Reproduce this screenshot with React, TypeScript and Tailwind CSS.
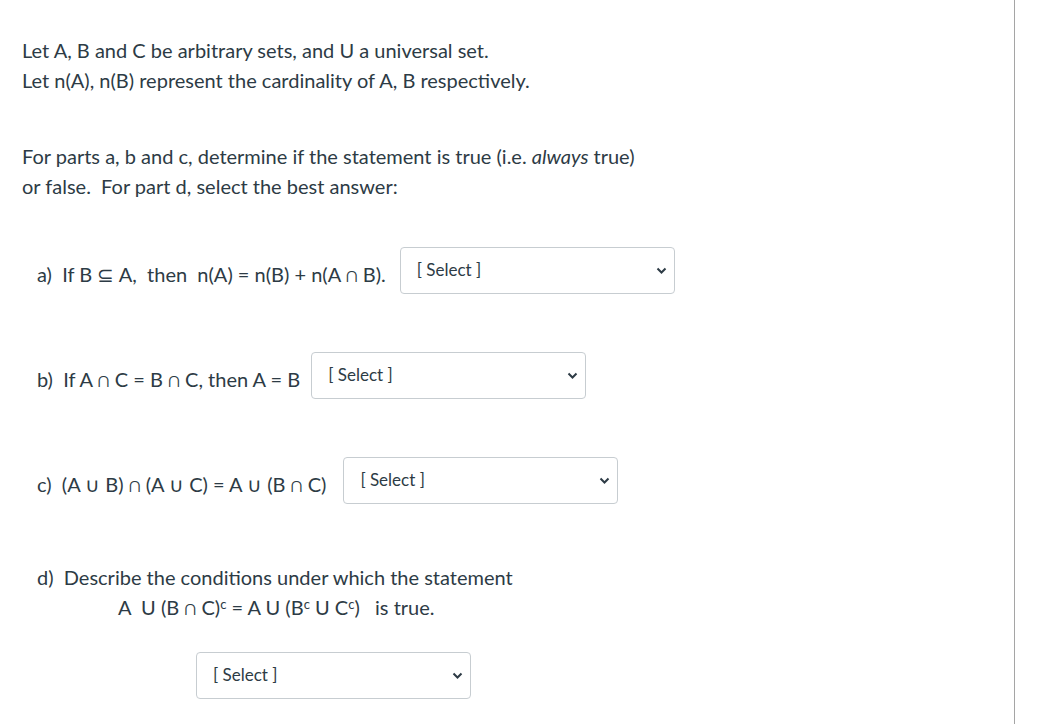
import React from "react";

// dropdown placeholder used by all four parts
function SelectBox({ className = "" }: { className?: string }) {
    return (
        <div className={`relative flex h-[47px] w-[275px] shrink-0 items-center rounded-[4px] border border-[#c7cdd1] bg-white pl-[16px] ${className}`}>
            <span className="-mt-[3px] text-[17px] leading-none text-[#2d3b45]">[ Select ]</span>
            <svg className="absolute right-[7px] top-[19px]" width="11" height="8" viewBox="0 0 11 8">
                <polyline points="1.5,1.5 5.5,5.5 9.5,1.5" fill="none" stroke="#2d3b45" strokeWidth="2" />
            </svg>
        </div>
    );
}

export default function App() {
    return (
        <div className="h-[724px] w-[1053px] overflow-hidden bg-white font-[family-name:Lato,'Open_Sans',sans-serif] text-[#2d3b45]">
            <div className="h-full w-[1015px] border-r border-[#a5a5a5] pl-[22px] pt-[35px] text-[20px] leading-[30px]">
                <p>Let A, B and C be arbitrary sets, and U a universal set.</p>
                <p>Let n(A), n(B) represent the cardinality of A, B respectively.</p>

                <p className="mt-[46px]">For parts a, b and c, determine if the statement is true (i.e. <em>always</em> true)</p>
                <p>or false.&nbsp; For part d, select the best answer:</p>

                <div className="mt-[46px] flex items-center pl-[15px]">
                    <span className="mt-[6px] whitespace-nowrap">a)&nbsp; If B ⊆ A,&nbsp; then&nbsp; n(A) = n(B) + n(A ∩ B).</span>
                    <SelectBox className="ml-[14px]" />
                </div>

                <div className="mt-[58px] flex items-center pl-[15px]">
                    <span className="mt-[6px] whitespace-nowrap">b)&nbsp; If A ∩ C = B ∩ C, then A = B</span>
                    <SelectBox className="ml-[11px]" />
                </div>

                <div className="mt-[58px] flex items-center pl-[15px]">
                    <span className="mt-[6px] whitespace-nowrap">c)&nbsp; (A ∪ B) ∩ (A ∪ C) = A ∪ (B ∩ C)</span>
                    <SelectBox className="ml-[17px]" />
                </div>

                <div className="mt-[58px] pl-[15px]">
                    <p className="whitespace-nowrap">d)&nbsp; Describe the conditions under which the statement</p>
                    <p className="whitespace-nowrap pl-[81px]">
                        A&nbsp; U (B ∩ C)<sup className="text-[13px] leading-none">c</sup> = A U (B<sup className="text-[13px] leading-none">c</sup> U C<sup className="text-[13px] leading-none">c</sup>)&nbsp;&nbsp; is true.
                    </p>
                </div>

                <SelectBox className="ml-[174px] mt-[30px]" />
            </div>
        </div>
    );
}
